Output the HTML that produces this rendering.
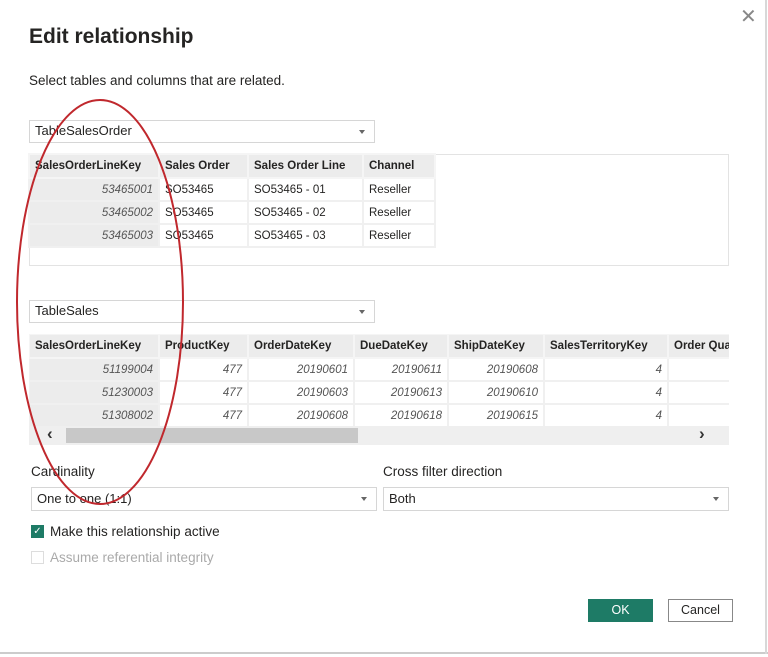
<!DOCTYPE html>
<html><head><style>
body{margin:0;width:768px;height:657px;background:#fff;font-family:"Liberation Sans",sans-serif;position:relative;overflow:hidden;color:#252423}
.a{position:absolute}
.dd{position:absolute;border:1px solid #d6d6d6;background:#fff;font-size:13px;box-sizing:border-box;padding-left:5px;line-height:20px}
.dd:after{content:"";position:absolute;right:9px;top:9px;border:3.5px solid transparent;border-top:4px solid #666}
table{border-collapse:collapse;font-size:11.5px;position:absolute}
td{border:2px solid #f0f0f0;height:21px;padding:0 5px;white-space:nowrap;overflow:hidden}
th{background:#ececec;border:2px solid #f5f5f5;height:22px;text-align:left;padding:0 5px;font-weight:bold;white-space:nowrap;overflow:hidden}
td.k{background:#ececec;text-align:right;font-style:italic;color:#555}
td.n{text-align:right;font-style:italic;color:#555}
</style></head><body>
<div class="a" style="left:29px;top:25px;font-size:21px;font-weight:bold;color:#252423">Edit relationship</div>
<div class="a" style="left:740px;top:4px;font-size:20px;color:#888">✕</div>
<div class="a" style="left:29px;top:73px;font-size:13.5px">Select tables and columns that are related.</div>
<div class="dd" style="left:29px;top:120px;width:346px;height:23px">TableSalesOrder</div>
<div class="a" style="left:29px;top:154px;width:700px;height:112px;border:1px solid #e3e3e3;box-sizing:border-box"></div>
<table style="left:28px;top:153px;table-layout:fixed">
<col width="130"><col width="89"><col width="115"><col width="72">
<tr><th>SalesOrderLineKey</th><th>Sales Order</th><th>Sales Order Line</th><th>Channel</th></tr>
<tr><td class="k">53465001</td><td>SO53465</td><td>SO53465 - 01</td><td>Reseller</td></tr>
<tr><td class="k">53465002</td><td>SO53465</td><td>SO53465 - 02</td><td>Reseller</td></tr>
<tr><td class="k">53465003</td><td>SO53465</td><td>SO53465 - 03</td><td>Reseller</td></tr>
</table>
<div class="dd" style="left:29px;top:300px;width:346px;height:23px">TableSales</div>
<div class="a" style="left:29px;top:334px;width:700px;height:112px;overflow:hidden">
<table style="left:-1px;top:-1px;table-layout:fixed;width:710px">
<col width="130"><col width="89"><col width="106"><col width="94"><col width="96"><col width="124"><col width="71">
<tr><th>SalesOrderLineKey</th><th>ProductKey</th><th>OrderDateKey</th><th>DueDateKey</th><th>ShipDateKey</th><th>SalesTerritoryKey</th><th>Order Quantity</th></tr>
<tr><td class="k">51199004</td><td class="n">477</td><td class="n">20190601</td><td class="n">20190611</td><td class="n">20190608</td><td class="n">4</td><td></td></tr>
<tr><td class="k">51230003</td><td class="n">477</td><td class="n">20190603</td><td class="n">20190613</td><td class="n">20190610</td><td class="n">4</td><td></td></tr>
<tr><td class="k">51308002</td><td class="n">477</td><td class="n">20190608</td><td class="n">20190618</td><td class="n">20190615</td><td class="n">4</td><td></td></tr>
</table>
<div class="a" style="left:0;top:92px;width:700px;height:19px;background:#efefef"></div>
<div class="a" style="left:37px;top:94px;width:292px;height:15px;background:#c8c8c8"></div>
<div class="a" style="left:18px;top:90px;font-size:17px;font-weight:bold;color:#333">‹</div>
<div class="a" style="left:670px;top:90px;font-size:17px;font-weight:bold;color:#333">›</div>
</div>
<div class="a" style="left:31px;top:464px;font-size:13.5px">Cardinality</div>
<div class="a" style="left:383px;top:464px;font-size:13.5px">Cross filter direction</div>
<div class="dd" style="left:31px;top:487px;width:346px;height:24px;line-height:22px">One to one (1:1)</div>
<div class="dd" style="left:383px;top:487px;width:346px;height:24px;line-height:22px">Both</div>
<div class="a" style="left:31px;top:525px;width:13px;height:13px;background:#1e7b66;color:#fff;font-size:10px;line-height:13px;text-align:center">✓</div>
<div class="a" style="left:50px;top:524px;font-size:13.5px">Make this relationship active</div>
<div class="a" style="left:31px;top:551px;width:11px;height:11px;border:1px solid #ddd"></div>
<div class="a" style="left:50px;top:550px;font-size:13.5px;color:#aaa">Assume referential integrity</div>
<div class="a" style="left:588px;top:599px;width:65px;height:23px;background:#1e7b66;color:#fff;font-size:12.5px;text-align:center;line-height:23px">OK</div>
<div class="a" style="left:668px;top:599px;width:65px;height:23px;border:1px solid #888;box-sizing:border-box;font-size:12.5px;text-align:center;line-height:21px">Cancel</div>
<div class="a" style="left:0;top:652px;width:768px;height:2px;background:#ccc"></div>
<div class="a" style="left:765px;top:0;width:2px;height:654px;background:#d8d8d8"></div>
<svg class="a" style="left:0;top:0" width="768" height="657"><ellipse cx="100" cy="302" rx="83" ry="202" fill="none" stroke="#c0282d" stroke-width="2"/></svg>
</body></html>
